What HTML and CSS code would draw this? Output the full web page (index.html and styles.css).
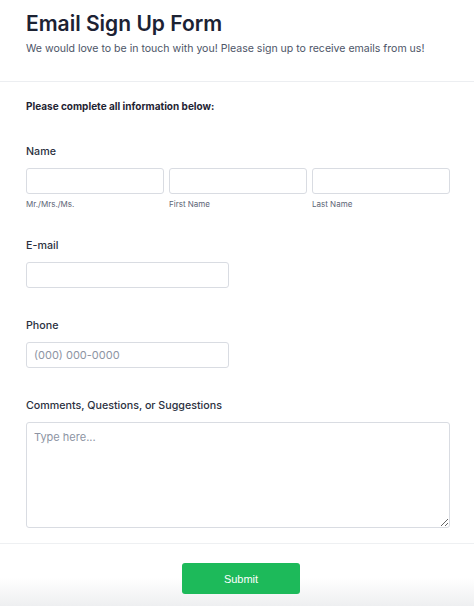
FILE: index.html
```html
<!DOCTYPE html>
<html lang="en">
<head>
  <meta charset="UTF-8">
  <meta name="viewport" content="width=device-width, initial-scale=1.0">
  <title>Email Sign Up Form</title>
  <link rel="stylesheet" href="styles.css">
</head>
<body>
  <div class="page">
    <!-- header -->
    <div class="form-header">
      <h1>Email Sign Up Form</h1>
      <p class="subtitle">We would love to be in touch with you! Please sign up to receive emails from us!</p>
    </div>

    <div class="form-body">
      <p class="intro">Please complete all information below:</p>

      <div class="field field-name">
        <label>Name</label>
        <div class="name-row">
          <div class="name-part">
            <input type="text">
            <span class="sublabel">Mr./Mrs./Ms.</span>
          </div>
          <div class="name-part">
            <input type="text">
            <span class="sublabel">First Name</span>
          </div>
          <div class="name-part">
            <input type="text">
            <span class="sublabel">Last Name</span>
          </div>
        </div>
      </div>

      <div class="field">
        <label>E-mail</label>
        <input type="text" class="half">
      </div>

      <div class="field">
        <label>Phone</label>
        <input type="text" class="half" placeholder="(000) 000-0000">
      </div>

      <div class="field">
        <label>Comments, Questions, or Suggestions</label>
        <textarea placeholder="Type here..."></textarea>
      </div>
    </div>

    <div class="form-footer">
      <button class="submit-btn">Submit</button>
    </div>
  </div>
</body>
</html>
```

FILE: styles.css
```css
body {
  margin: 0;
  font-family: Inter, "Liberation Sans", sans-serif;
  background: #ffffff;
  color: #1f2433;
}
.page {
  width: 474px;
  min-height: 606px;
  background: #ffffff;
}
/* header */
.form-header {
  padding: 10px 26px 0;
  height: 71px;
  border-bottom: 1px solid #eceef1;
}
h1 {
  margin: 0;
  font-size: 21px;
  font-weight: 600;
  line-height: 28px;
  color: #1c2233;
}
.subtitle {
  margin: 3px 0 0;
  font-size: 10.55px;
  line-height: 16px;
  color: #4d5567;
  white-space: nowrap;
}
/* body */
.form-body {
  padding: 0 24px 0 26px;
  height: 461px;
  border-bottom: 1px solid #eef0f2;
}
.intro {
  margin: 0;
  padding-top: 17px;
  font-size: 10px;
  font-weight: 700;
  line-height: 14px;
  color: #1f2433;
}
.field {
  margin-top: 31px;
}
.field-name {
  margin-top: 32px;
}
label {
  display: block;
  font-size: 10.7px;
  font-weight: 500;
  line-height: 14px;
  color: #2a3040;
  margin-bottom: 9px;
}
input[type="text"],
textarea {
  box-sizing: border-box;
  display: block;
  height: 26px;
  padding: 0 7px;
  font-family: Inter, "Liberation Sans", sans-serif;
  font-size: 11px;
  color: #1f2433;
  background: #ffffff;
  border: 1px solid #d9dce2;
  border-radius: 3px;
  outline: none;
}
input::placeholder,
textarea::placeholder {
  color: #8d94a3;
}
.half {
  width: 203px;
}
.name-row {
  display: grid;
  grid-template-columns: repeat(3, 138px);
  column-gap: 5px;
}
.name-part input {
  width: 100%;
}
.sublabel {
  display: block;
  margin-top: 7px;
  font-size: 8px;
  line-height: 7px;
  color: #5c6475;
}
textarea {
  width: 424px;
  height: 106px;
  padding: 7px 7px;
  resize: vertical;
}
/* footer */
.form-footer {
  display: flex;
  justify-content: center;
  padding: 19px 0 0 8px;
  height: 43px;
  background: linear-gradient(#ffffff 0, #ffffff 34px, #eeeff1 100%);
}
.submit-btn {
  width: 118px;
  height: 31px;
  background: #1dba5a;
  color: #ffffff;
  border: none;
  border-radius: 3px;
  font-family: "Liberation Sans", Arial, sans-serif;
  font-size: 11px;
  cursor: pointer;
}
```
